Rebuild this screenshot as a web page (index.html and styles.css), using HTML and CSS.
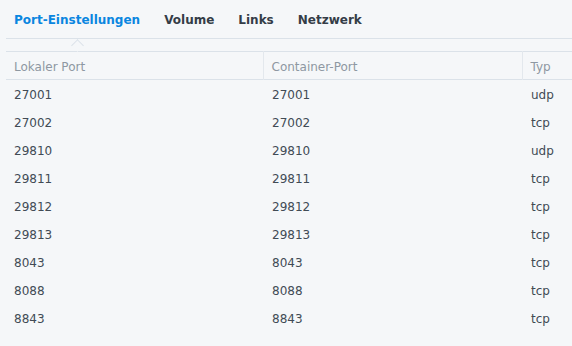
FILE: index.html
```html
<!DOCTYPE html>
<html lang="de">
<head>
    <meta charset="UTF-8">
    <title>Port-Einstellungen</title>
    <link rel="stylesheet" href="styles.css">
</head>
<body>
    <div class="panel">
        <ul class="tabs">
            <li class="active">Port-Einstellungen</li>
            <li>Volume</li>
            <li>Links</li>
            <li>Netzwerk</li>
        </ul>
        <table class="ports">
            <thead>
                <tr><th class="colLocal">Lokaler Port</th><th class="colContainer">Container-Port</th><th class="colType">Typ</th></tr>
            </thead>
            <tbody>
                <tr><td>27001</td><td>27001</td><td>udp</td></tr>
                <tr><td>27002</td><td>27002</td><td>tcp</td></tr>
                <tr><td>29810</td><td>29810</td><td>udp</td></tr>
                <tr><td>29811</td><td>29811</td><td>tcp</td></tr>
                <tr><td>29812</td><td>29812</td><td>tcp</td></tr>
                <tr><td>29813</td><td>29813</td><td>tcp</td></tr>
                <tr><td>8043</td><td>8043</td><td>tcp</td></tr>
                <tr><td>8088</td><td>8088</td><td>tcp</td></tr>
                <tr><td>8843</td><td>8843</td><td>tcp</td></tr>
            </tbody>
        </table>
    </div>
</body>
</html>
```

FILE: styles.css
```css
* { margin: 0; padding: 0; box-sizing: border-box; }

html, body { background-color: #f5f7f9; }
body {
    font-family: "DejaVu Sans", Verdana, sans-serif;
    font-size: 12px; color: #414b55;
    width: 572px; height: 346px; overflow: hidden;
}

.panel { padding: 0 0 0 6px; }

/* tabs: bottom line with a little notch under the active one */
.tabs {
    list-style: none; display: flex; gap: 24px;
    height: 39px; padding: 10px 0 0 8px;
    border-bottom: 1px solid #dbe2e9;
}
.tabs li {
    position: relative;
    font-weight: bold; color: #343d47; line-height: 20px;
}
.tabs li.active { color: #0a86e0; }
.tabs li.active::after {
    content: ""; position: absolute; left: 50%; bottom: -12px;
    width: 8px; height: 8px; margin-left: -4px;
    background-color: #f5f7f9;
    border-left: 1px solid #dbe2e9; border-top: 1px solid #dbe2e9;
    transform: rotate(45deg);
}

.ports {
    margin-top: 12px; width: 566px;
    border-collapse: collapse; table-layout: fixed;
}
.ports thead tr { border-top: 1px solid #dbe2e9; border-bottom: 1px solid #dbe2e9; }
.ports th {
    height: 28px; padding: 2px 8px 0;
    text-align: left; font-weight: normal; color: #8e98a2;
}
.ports th + th { border-left: 1px solid #e3e8ed; }
.colLocal { width: 257px; }
.colContainer { width: 259px; }
.ports td { height: 28px; padding: 2px 8px 0; }
.ports td + td { padding-left: 9px; }
```
